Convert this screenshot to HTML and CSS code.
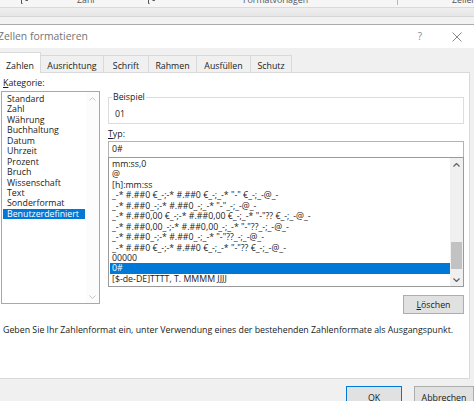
FILE: index.html
```html
<!DOCTYPE html>
<html lang="de">
<head>
<meta charset="utf-8">
<title>Zellen formatieren</title>
<link rel="stylesheet" href="styles.css">
</head>
<body>
<div class="screen">
  <div class="ribbon">
    <div class="ribbon-labels">
      <svg class="launcher" width="9" height="8" viewBox="0 0 9 8"><path d="M1.5 0 V3.5 H2.5 M4 -3 L7.5 0.5 M7.5 -1.5 V0.5 H5.5" fill="none" stroke="#555" stroke-width="1"/></svg>
      <span class="rl-text">Zahl</span>
      <svg class="launcher" width="9" height="8" viewBox="0 0 9 8"><path d="M1.5 0 V3.5 H2.5 M4 -3 L7.5 0.5 M7.5 -1.5 V0.5 H5.5" fill="none" stroke="#555" stroke-width="1"/></svg>
      <span class="rl-text">Formatvorlagen</span>
      <span class="rl-sep"></span>
      <span class="rl-text">Zellen</span>
    </div>
    <div class="band band-a"></div>
    <div class="band band-b"></div>
  </div>

  <div class="titlebar">
    <span class="title">Zellen formatieren</span>
    <span class="help">?</span>
    <svg class="close" width="10" height="10" viewBox="0 0 10 10"><path d="M0.5 0.5 L9.5 9.5 M9.5 0.5 L0.5 9.5" stroke="#7a7a7a" stroke-width="0.9" fill="none"/></svg>
  </div>

  <div class="client">
    <div class="tabs">
      <div class="tab tab-active w-zahlen">Zahlen</div>
      <div class="tab w-ausrichtung">Ausrichtung</div>
      <div class="tab w-schrift">Schrift</div>
      <div class="tab w-rahmen">Rahmen</div>
      <div class="tab w-ausfuellen">Ausfüllen</div>
      <div class="tab w-schutz">Schutz</div>
    </div>

    <div class="panel">
      <div class="panel-main">
        <div class="col-left">
          <div class="label"><u>K</u>ategorie:</div>
          <div class="listbox cat-list">
            <ul class="items">
              <li>Standard</li>
              <li>Zahl</li>
              <li>Währung</li>
              <li>Buchhaltung</li>
              <li>Datum</li>
              <li>Uhrzeit</li>
              <li>Prozent</li>
              <li>Bruch</li>
              <li>Wissenschaft</li>
              <li>Text</li>
              <li>Sonderformat</li>
              <li class="sel">Benutzerdefiniert</li>
            </ul>
            <div class="vscroll vscroll-disabled">
              <div class="arrow"><svg width="7" height="4" viewBox="0 0 7 4"><path d="M0.5 3.5 L3.5 0.5 L6.5 3.5" fill="none" stroke="#c4c4c4" stroke-width="1"/></svg></div>
              <div class="track"></div>
              <div class="arrow"><svg width="7" height="4" viewBox="0 0 7 4"><path d="M0.5 0.5 L3.5 3.5 L6.5 0.5" fill="none" stroke="#c4c4c4" stroke-width="1"/></svg></div>
            </div>
          </div>
        </div>

        <div class="col-right">
          <fieldset class="sample">
            <legend>Beispiel</legend>
            <div class="sample-val">01</div>
          </fieldset>
          <div class="label typ-label"><u>T</u>yp:</div>
          <div class="typ-input">0#</div>
          <div class="listbox fmt-list">
            <ul class="items">
              <li>mm:ss,0</li>
              <li>@</li>
              <li>[h]:mm:ss</li>
              <li>_-* #.##0 €_-;-* #.##0 €_-;_-* "-" €_-;_-@_-</li>
              <li>_-* #.##0_-;-* #.##0_-;_-* "-"_-;_-@_-</li>
              <li>_-* #.##0,00 €_-;-* #.##0,00 €_-;_-* "-"?? €_-;_-@_-</li>
              <li>_-* #.##0,00_-;-* #.##0,00_-;_-* "-"??_-;_-@_-</li>
              <li>_-* #.##0_-;-* #.##0_-;_-* "-"??_-;_-@_-</li>
              <li>_-* #.##0 €_-;-* #.##0 €_-;_-* "-"?? €_-;_-@_-</li>
              <li>00000</li>
              <li class="sel">0#</li>
              <li>[$-de-DE]TTTT, T. MMMM JJJJ</li>
            </ul>
            <div class="vscroll">
              <div class="arrow"><svg width="7" height="4" viewBox="0 0 7 4"><path d="M0.5 3.5 L3.5 0.5 L6.5 3.5" fill="none" stroke="#606060" stroke-width="1.2"/></svg></div>
              <div class="track"><div class="thumb"></div></div>
              <div class="arrow"><svg width="7" height="4" viewBox="0 0 7 4"><path d="M0.5 0.5 L3.5 3.5 L6.5 0.5" fill="none" stroke="#606060" stroke-width="1.2"/></svg></div>
            </div>
          </div>
          <div class="btn-row">
            <button class="btn btn-del"><u>L</u>öschen</button>
          </div>
        </div>
      </div>
      <p class="hint">Geben Sie Ihr Zahlenformat ein, unter Verwendung eines der bestehenden Zahlenformate als Ausgangspunkt.</p>
    </div>

    <div class="footer">
      <button class="btn btn-ok">OK</button>
      <button class="btn btn-cancel">Abbrechen</button>
    </div>
  </div>
</div>
</body>
</html>
```

FILE: styles.css
```css
* { box-sizing: border-box; }
html, body { margin: 0; padding: 0; }
body {
  width: 474px;
  height: 401px;
  overflow: hidden;
  background: #f0f0f0;
  font-family: "Open Sans", "Noto Sans", sans-serif;
  font-size: 8.8px;
  line-height: 11px;
  color: #1a1a1a;
}
.screen { width: 474px; height: 401px; overflow: hidden; }

/* ribbon fragment */
.ribbon { height: 25px; }
.ribbon-labels {
  height: 8px;
  overflow: hidden;
  background: #f6f6f6;
  border-bottom: 1px solid #dadada;
  display: grid;
  grid-template-columns: 57px 70px 96px 154px 55px 1fr;
  padding-left: 20px;
  color: #555;
  align-items: start;
}
.rl-text { margin-top: -5px; white-space: nowrap; }
.launcher { display: block; }
.rl-sep { width: 1px; height: 5px; background: #b8b8b8; }
.band { width: 100%; }
.band-a { height: 9px; background: linear-gradient(#eeeeee, #e6e6e6); border-bottom: 1px solid #d6d6d6; }
.band-b { height: 8px; background: #f2f2f2; border-bottom: 1px solid #ababab; }

/* title bar */
.titlebar {
  height: 23px;
  background: #ffffff;
  display: flex;
  align-items: center;
}
.title { flex: 1; margin-left: -2px; font-size: 10.4px; color: #737373; }
.help { width: 10px; text-align: center; font-size: 10px; color: #8a8a8a; margin-right: 27px; }
.close { margin-right: 12px; }

/* client */
.client { height: 353px; background: #f0f0f0; }
.tabs {
  height: 24px;
  display: flex;
  align-items: flex-end;
}
.tab {
  height: 17px;
  margin-left: -1px;
  border: 1px solid #d9d9d9;
  border-bottom: 0;
  background: #f0f0f0;
  display: flex;
  align-items: flex-end;
  justify-content: center;
  padding-bottom: 0;
  white-space: nowrap;
  color: #1a1a1a;
}
.tab-active {
  height: 21px;
  margin-bottom: -1px;
  background: #ffffff;
  position: relative;
  z-index: 1;
  padding-bottom: 1px;
}
.w-zahlen { width: 42px; }
.w-ausrichtung { width: 64px; }
.w-schrift { width: 46px; }
.w-rahmen { width: 49px; }
.w-ausfuellen { width: 55px; }
.w-schutz { width: 42px; }

.panel {
  margin-left: -1px;
  width: 471px;
  height: 307px;
  background: #ffffff;
  border: 1px solid #d9d9d9;
  padding: 5px 5px 0 1px;
}
.panel-main { display: flex; gap: 8px; align-items: flex-start; }
.col-left { width: 99px; }
.col-right { width: 356px; }
.label { height: 11px; padding-left: 2px; white-space: nowrap; }
.label u { text-decoration-thickness: 1px; text-underline-offset: 1px; }

.listbox {
  border: 1px solid #a3a3a3;
  background: #ffffff;
  display: flex;
}
.items { list-style: none; margin: 0; flex: 1; padding: 2px 1px 0 1px; }
.items li { height: 10.45px; line-height: 10.45px; padding-left: 4px; white-space: nowrap; overflow: hidden; }
.items li.sel { background: #0078d7; color: #ffffff; }

.cat-list { margin-top: 2px; height: 213px; border-color: #a8a8a8; }
.vscroll { width: 13px; display: flex; flex-direction: column; background: #f0f0f0; }
.vscroll .arrow { height: 13px; display: flex; align-items: center; justify-content: center; }
.vscroll .track { flex: 1; }
.vscroll-disabled { background: #fcfcfc; }
.thumb { margin-top: 71px; height: 27px; background: #c2c2c2; margin-left: 1px; margin-right: 1px; }

/* right column */
.sample {
  margin: 14px 0 0 0;
  padding: 6px 6px 3px 6px;
  border: 1px solid #dcdcdc;
  min-width: 0;
}
.sample legend { padding: 0 1px; margin-left: -3px; line-height: 11px; }
.sample-val { line-height: 11px; }
.typ-label { margin-top: 5px; padding-left: 0; }
.typ-input {
  margin-top: 1px;
  height: 17px;
  border: 1px solid #b4b4b4;
  border-bottom-color: #7a7a7a;
  line-height: 15px;
  padding-left: 3px;
  background: #ffffff;
}
.fmt-list { margin-top: -1px; height: 130px; border-color: #9a9a9a; }
.fmt-list .items { padding: 1px 0 0 1px; }
.fmt-list .items li { padding-left: 2px; }

.btn-row { display: flex; justify-content: flex-end; margin-top: 8px; }
.btn {
  font-family: inherit;
  font-size: 8.8px;
  color: #1a1a1a;
  background: #e1e1e1;
  border: 1px solid #adadad;
  padding: 0;
  margin: 0;
}
.btn-del { width: 61px; height: 19px; }
.btn u { text-decoration-thickness: 1px; text-underline-offset: 1px; }

.hint { margin: 11px 0 0 2px; white-space: nowrap; }

.footer {
  display: flex;
  justify-content: flex-end;
  gap: 12px;
  padding-top: 7px;
}
.btn-ok { width: 56px; height: 24px; border-color: #0078d7; }
.btn-cancel { width: 60px; height: 24px; }
```
